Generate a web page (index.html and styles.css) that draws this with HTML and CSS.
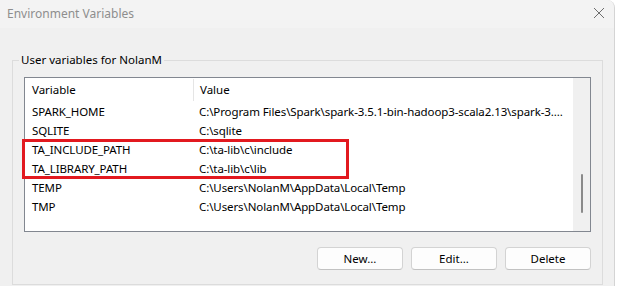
FILE: index.html
```html
<!DOCTYPE html>
<html lang="en">

<head>
  <meta charset="UTF-8">
  <meta name="viewport" content="width=device-width, initial-scale=1.0">
  <title>Environment Variables</title>
  <link rel="stylesheet" href="styles.css">
</head>

<body>
  <div class="window">
    <div class="titlebar">
      <span class="title">Environment Variables</span>
      <svg class="close" width="12" height="12" viewBox="0 0 12 12">
        <path d="M1 1 L11 11 M11 1 L1 11" stroke="#6e6e6e" stroke-width="1" fill="none" />
      </svg>
    </div>

    <div class="content">
      <fieldset class="group">
        <legend>User variables for NolanM</legend>

        <div class="listview">
          <div class="list">
            <div class="row header">
              <div class="cell name">Variable</div>
              <div class="cell value">Value</div>
            </div>
            <div class="row">
              <div class="cell name">SPARK_HOME</div>
              <div class="cell value">C:\Program Files\Spark\spark-3.5.1-bin-hadoop3-scala2.13\spark-3....</div>
            </div>
            <div class="row">
              <div class="cell name">SQLITE</div>
              <div class="cell value">C:\sqlite</div>
            </div>
            <div class="row">
              <div class="cell name">TA_INCLUDE_PATH</div>
              <div class="cell value">C:\ta-lib\c\include</div>
            </div>
            <div class="row">
              <div class="cell name">TA_LIBRARY_PATH</div>
              <div class="cell value">C:\ta-lib\c\lib</div>
            </div>
            <div class="row">
              <div class="cell name">TEMP</div>
              <div class="cell value">C:\Users\NolanM\AppData\Local\Temp</div>
            </div>
            <div class="row">
              <div class="cell name">TMP</div>
              <div class="cell value">C:\Users\NolanM\AppData\Local\Temp</div>
            </div>
          </div>
          <div class="scrollbar">
            <div class="thumb"></div>
          </div>
          <!-- annotation drawn over the list -->
          <div class="highlight"></div>
        </div>

        <div class="buttons">
          <button class="btn">New...</button>
          <button class="btn">Edit...</button>
          <button class="btn">Delete</button>
        </div>
      </fieldset>
    </div>
  </div>
</body>

</html>
```

FILE: styles.css
```css
body {
  margin: 0;
  background-color: #ffffff;
  font-family: "Noto Sans", "Liberation Sans", sans-serif;
  font-size: 11.5px;
  color: #000000;
}

.window {
  width: 614px;
  height: 286px;
  background-color: #f0f0f0;
  border-right: 1px solid #d4d4d4;
  border-top-right-radius: 8px;
  overflow: hidden;
}

.titlebar {
  height: 28px;
  display: flex;
  align-items: center;
  justify-content: space-between;
  padding: 0 9px 0 7px;
  background-color: #f3f3f3;
}

.title {
  color: #8e8e8e;
  font-size: 12px;
  line-height: 16px;
}

.close {
  margin-top: -2px;
}

.content {
  padding: 24px 11px 0 12px;
}

.group {
  margin: 0;
  padding: 0 11px 14px 11px;
  border: 1px solid #dcdcdc;
  min-width: 0;
}

.group legend {
  margin-left: -5px;
  padding: 0 2px;
  line-height: 16px;
}

.listview {
  position: relative;
  margin-top: 9px;
  height: 153px;
  display: flex;
  background-color: #ffffff;
  border: 1px solid #828790;
}

.list {
  flex: 1;
  overflow: hidden;
}

.row {
  display: flex;
  height: 19px;
  align-items: center;
  white-space: nowrap;
  letter-spacing: -0.1px;
}

.row.header {
  height: 24px;
  letter-spacing: 0;
}

.cell {
  padding-left: 7px;
}

.cell.name {
  width: 161px;
  flex-shrink: 0;
}

.header .cell.name {
  border-right: 1px solid #e5e5e5;
  height: 22px;
  line-height: 22px;
}

.header .cell.value {
  line-height: 22px;
  padding-left: 6px;
}

.row .cell.value {
  padding-left: 6px;
}

.scrollbar {
  position: relative;
  width: 17px;
  background-color: #f0f0f0;
}

.thumb {
  position: absolute;
  left: 8px;
  top: 96px;
  width: 2px;
  height: 39px;
  border-radius: 1px;
  background-color: #8a8a8a;
}

.highlight {
  position: absolute;
  left: -3px;
  top: 61px;
  width: 321px;
  height: 34px;
  border: 3px solid #e2191f;
  pointer-events: none;
}

.buttons {
  display: flex;
  justify-content: flex-end;
  gap: 8px;
  margin-top: 15px;
}

.btn {
  width: 86px;
  height: 23px;
  padding: 0;
  font-family: inherit;
  font-size: 11.5px;
  color: #000000;
  background-color: #fdfdfd;
  border: 1px solid #d3d3d3;
  border-bottom-color: #c2c2c2;
  border-radius: 4px;
}
```
